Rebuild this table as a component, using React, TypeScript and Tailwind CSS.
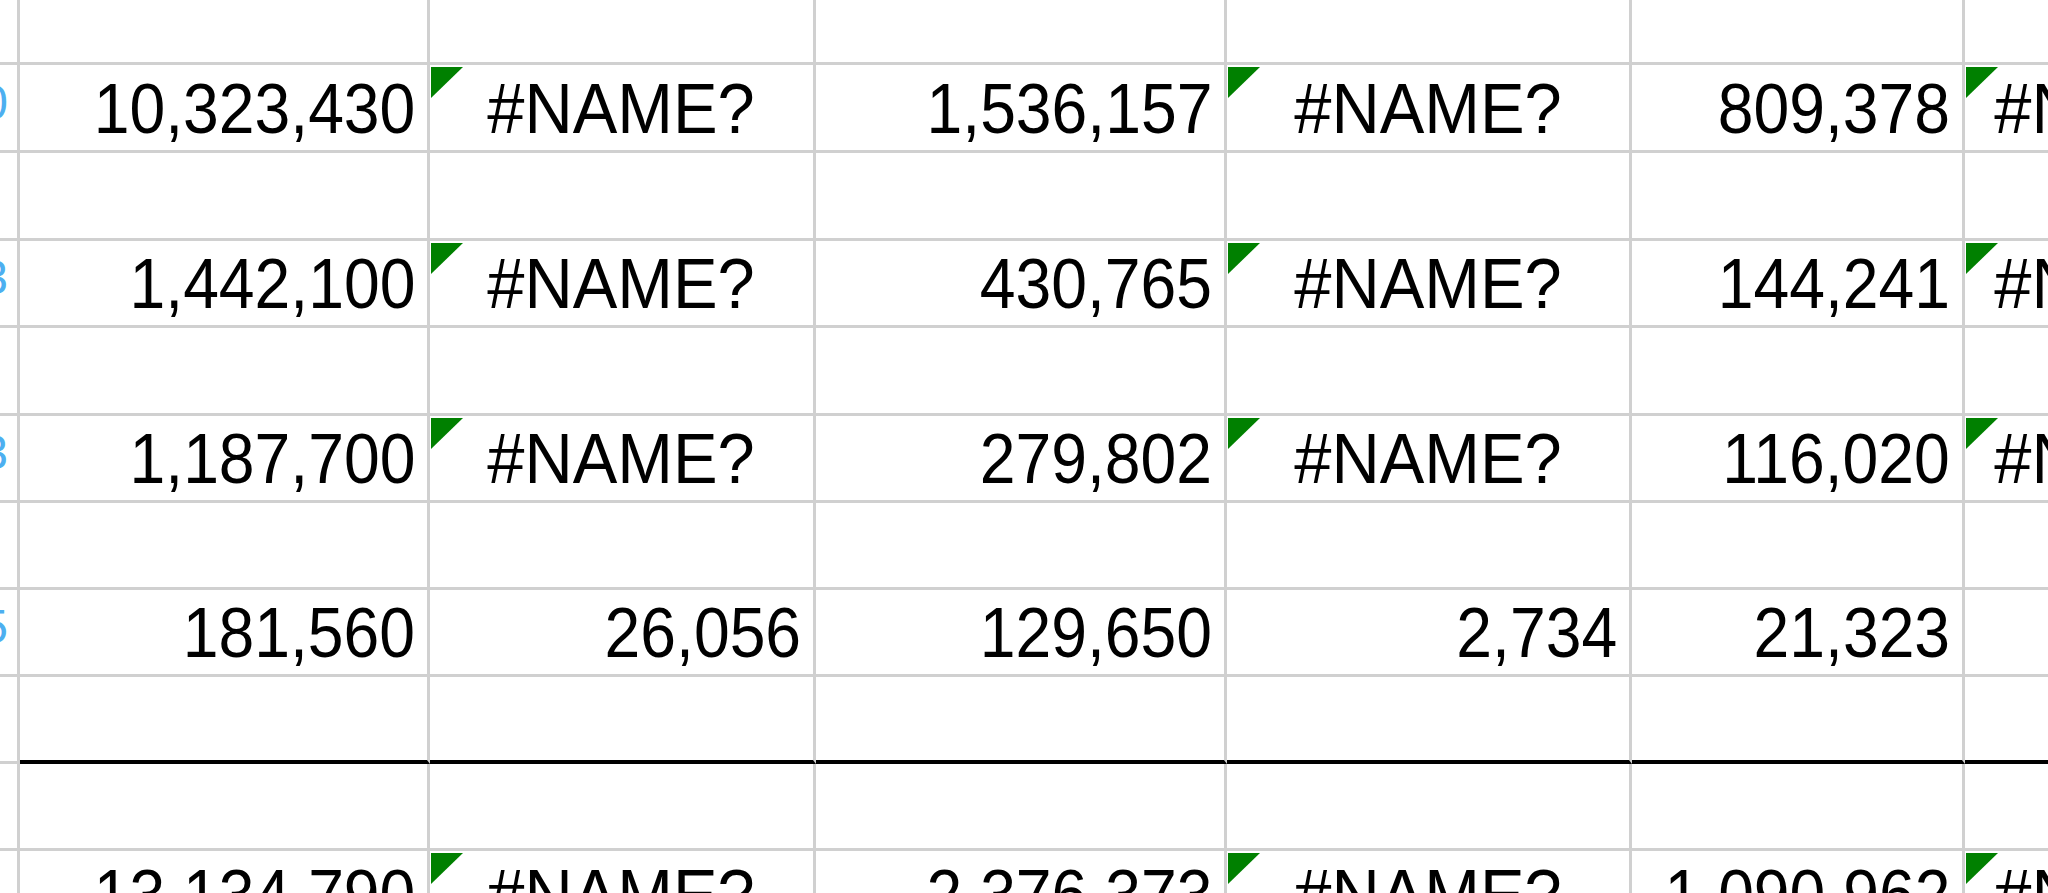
const ERR = '#NAME?';

const colW = ['w-[20px]', 'w-[410px]', 'w-[386px]', 'w-[411px]', 'w-[405px]', 'w-[333px]', 'w-[329px]'];

const rowH = [
  'h-[65px]', 'h-[88px]', 'h-[88px]', 'h-[87px]', 'h-[88px]', 'h-[87px]',
  'h-[87px]', 'h-[87px]', 'h-[87px]', 'h-[87px]', 'h-[88px]',
];

// row index -> values for columns A..F
const rows: Record<number, string[]> = {
  1: ['10,323,430', ERR, '1,536,157', ERR, '809,378', ERR],
  3: ['1,442,100', ERR, '430,765', ERR, '144,241', ERR],
  5: ['1,187,700', ERR, '279,802', ERR, '116,020', ERR],
  7: ['181,560', '26,056', '129,650', '2,734', '21,323', ''],
  10: ['13,134,790', ERR, '2,376,373', ERR, '1,090,962', ERR],
};

// clipped labels in the column left of A
const sideLabels: Record<number, string> = { 1: '10', 3: '13', 5: '13', 7: '15' };

const TOTAL_ROW_LINE = 8;

function Flag() {
  return (
    <svg className="absolute left-[1px] top-[2px]" width="32" height="31" viewBox="0 0 32 31">
      <polygon points="0,0 32,0 0,31" fill="#008000" />
    </svg>
  );
}

function Cell({ value, col, row }: { value: string; col: number; row: number }) {
  const black = row === TOTAL_ROW_LINE && col > 0;
  const border = black
    ? 'border-r-[3px] border-b-[4px] border-r-[#d0d0d0] border-b-black'
    : 'border-r-[3px] border-b-[3px] border-[#d0d0d0]';

  if (col === 0) {
    const label = sideLabels[row];
    return (
      <div className={`relative flex shrink-0 items-end justify-end overflow-hidden pr-[9px] pb-[23px] ${colW[col]} ${border}`}>
        {label && <span className="whitespace-nowrap text-[48px] leading-[48px] text-[#4daff0]">{label}</span>}
      </div>
    );
  }

  const isErr = value === ERR;
  return (
    <div
      className={`relative flex shrink-0 items-end pb-[6px] ${colW[col]} ${border} ${
        isErr ? 'justify-center' : 'justify-end pr-[12px]'
      }`}
    >
      {isErr && <Flag />}
      {value && (
        <span
          className={`inline-block whitespace-nowrap text-[70px] leading-[70px] text-black ${
            isErr ? 'origin-center scale-x-[0.955]' : 'origin-right scale-x-[0.918]'
          }`}
        >
          {value}
        </span>
      )}
    </div>
  );
}

export default function App() {
  return (
    <div
      className="h-[893px] w-[2048px] overflow-hidden bg-white"
      style={{ fontFamily: '"Liberation Sans", Arial, sans-serif' }}
    >
      {rowH.map((h, r) => {
        const vals = rows[r] ?? ['', '', '', '', '', ''];
        return (
          <div key={r} className={`flex ${h}`}>
            <Cell value="" col={0} row={r} />
            {vals.map((v, c) => (
              <Cell key={c} value={v} col={c + 1} row={r} />
            ))}
          </div>
        );
      })}
    </div>
  );
}
